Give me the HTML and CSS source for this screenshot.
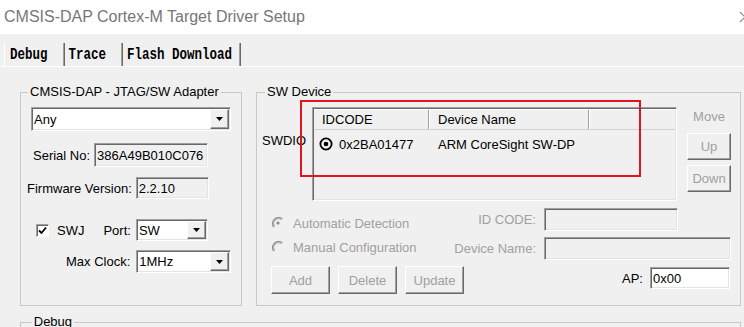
FILE: index.html
```html
<!DOCTYPE html>
<html lang="en">

<head>
    <meta charset="UTF-8">
    <meta name="viewport" content="width=device-width, initial-scale=1.0">
    <title>CMSIS-DAP Cortex-M Target Driver Setup</title>
    <link rel="stylesheet" href="styles.css">
</head>

<body>
    <div class="titlebar">
        <span class="title">CMSIS-DAP Cortex-M Target Driver Setup</span>
        <svg class="close" width="12" height="12" viewBox="0 0 12 12"><path d="M1 1L11 11M11 1L1 11" stroke="#8a8a8a" stroke-width="1.2"/></svg>
    </div>

    <div class="tabs">
        <span class="tab active"><span>Debug</span></span>
        <span class="tab"><span>Trace</span></span>
        <span class="tab flash"><span>Flash Download</span></span>
    </div>

    <div class="sheet">
        <div class="groups">
            <fieldset class="group adapter">
                <legend>CMSIS-DAP - JTAG/SW Adapter</legend>
                <div class="combo any">
                    <span class="value">Any</span>
                    <span class="drop"><svg width="7" height="4" viewBox="0 0 7 4"><polygon points="0,0 7,0 3.5,4" fill="#000"/></svg></span>
                </div>
                <div class="row serial">
                    <label>Serial No:</label>
                    <span class="field serial-no">386A49B010C076</span>
                </div>
                <div class="row firmware">
                    <label>Firmware Version:</label>
                    <span class="field fw">2.2.10</span>
                </div>
                <div class="row swj">
                    <span class="check"><svg width="9" height="9" viewBox="0 0 9 9"><path d="M1 4.5L3.5 7L8 1.5" stroke="#000" stroke-width="1.8" fill="none"/></svg></span>
                    <label class="swj-label">SWJ</label>
                    <label class="port-label">Port:</label>
                    <div class="combo port">
                        <span class="value">SW</span>
                        <span class="drop"><svg width="7" height="4" viewBox="0 0 7 4"><polygon points="0,0 7,0 3.5,4" fill="#000"/></svg></span>
                    </div>
                </div>
                <div class="row clock">
                    <label>Max Clock:</label>
                    <div class="combo clock-combo">
                        <span class="value">1MHz</span>
                        <span class="drop"><svg width="7" height="4" viewBox="0 0 7 4"><polygon points="0,0 7,0 3.5,4" fill="#000"/></svg></span>
                    </div>
                </div>
            </fieldset>

            <fieldset class="group device">
                <legend>SW Device</legend>
                <div class="device-top">
                    <span class="swdio">SWDIO</span>
                    <div class="list">
                        <div class="list-head">
                            <span class="head-cell c1">IDCODE</span>
                            <span class="head-cell c2">Device Name</span>
                            <span class="head-cell c3"></span>
                        </div>
                        <div class="list-row">
                            <span class="cell c1">
                                <svg width="14" height="14" viewBox="0 0 14 14"><circle cx="7" cy="7" r="5.6" stroke="#000" stroke-width="1.8" fill="none"/><circle cx="7" cy="7" r="2.3" fill="#000"/></svg>
                                0x2BA01477
                            </span>
                            <span class="cell c2">ARM CoreSight SW-DP</span>
                        </div>
                    </div>
                    <div class="move">
                        <span class="move-label">Move</span>
                        <button class="btn up" disabled>Up</button>
                        <button class="btn down" disabled>Down</button>
                    </div>
                </div>

                <div class="config">
                    <span class="radio auto">
                        <svg width="12" height="12" viewBox="0 0 12 12"><path d="M10.2 1.8A6 6 0 0 0 1.8 10.2" stroke="#8a8a8a" stroke-width="1.3" fill="none"/><path d="M9.3 2.7A4.7 4.7 0 0 0 2.7 9.3" stroke="#a8a8a8" stroke-width="1" fill="none"/><circle cx="6" cy="6" r="1.6" fill="#8a8a8a"/></svg>
                        Automatic Detection
                    </span>
                    <label>ID CODE:</label>
                    <span class="field idcode"></span>
                    <span class="radio manual">
                        <svg width="12" height="12" viewBox="0 0 12 12"><path d="M10.2 1.8A6 6 0 0 0 1.8 10.2" stroke="#8a8a8a" stroke-width="1.3" fill="none"/><path d="M9.3 2.7A4.7 4.7 0 0 0 2.7 9.3" stroke="#a8a8a8" stroke-width="1" fill="none"/></svg>
                        Manual Configuration
                    </span>
                    <label>Device Name:</label>
                    <span class="field devname"></span>
                </div>

                <div class="actions">
                    <button class="btn" disabled>Add</button>
                    <button class="btn" disabled>Delete</button>
                    <button class="btn" disabled>Update</button>
                    <label class="ap-label">AP:</label>
                    <span class="field white ap">0x00</span>
                </div>
            </fieldset>
        </div>

        <fieldset class="group debug">
            <legend>Debug</legend>
        </fieldset>
    </div>

    <div class="highlight"></div>
</body>
</html>
```

FILE: styles.css
```css
* {
    box-sizing: border-box;
}

body {
    margin: 0;
    width: 744px;
    height: 327px;
    overflow: hidden;
    position: relative;
    background-color: #f0f0f0;
    font-family: "Liberation Sans", Arial, sans-serif;
    font-size: 13px;
    color: #000;
}

/* window title */
.titlebar {
    height: 34px;
    background-color: #fff;
    display: flex;
    align-items: center;
    justify-content: space-between;
    padding-left: 4px;
}

.title {
    font-size: 16px;
    color: #777;
}

.close {
    margin-right: -7px;
}

/* tab strip */
.tabs {
    height: 33px;
    padding: 9px 0 0 4px;
    display: flex;
    border-bottom: 1px solid #fff;
}

.tab {
    height: 23px;
    display: flex;
    align-items: center;
    padding: 0 15px 0 5px;
    font-family: "Liberation Mono", monospace;
    font-weight: bold;
    font-size: 12.5px;
    border-right: 1px solid #a0a0a0;
    box-shadow: 1px 0 0 #696969;
}

.tab span {
    display: inline-block;
    transform: scaleY(1.3);
}

.tab.active {
    border-left: 1px solid #fff;
}

.tab.flash {
    padding-right: 7px;
}

/* tab page */
.sheet {
    padding-top: 17px;
}

.groups {
    display: flex;
    gap: 14px;
    margin-left: 20px;
}

.group {
    margin: 0;
    min-width: 0;
    border: 1px solid #c8c8c8;
}

.group legend {
    padding: 0 2px;
    line-height: 16px;
}

.adapter {
    width: 222px;
    padding: 7px 0 0 6px;
}

.adapter legend {
    margin-left: 1px;
}

.device {
    width: 485px;
    padding: 7px 9px 11px 5px;
}

.device legend {
    margin-left: 3px;
}

.debug {
    width: 721px;
    height: 40px;
    margin: 8px 0 0 20px;
}

.debug legend {
    margin-left: 1px;
}

/* sunken edit and combo boxes */
.combo,
.field {
    display: flex;
    align-items: center;
    border: 1px solid;
    border-color: #a0a0a0 #fff #fff #a0a0a0;
    box-shadow: inset 1px 1px 0 #696969, inset -1px -1px 0 #e3e3e3;
    padding: 1px;
}

.combo {
    align-items: stretch;
    background-color: #fff;
}

.combo .value {
    flex: 1;
    display: flex;
    align-items: center;
    padding-left: 1px;
}

.drop {
    width: 19px;
    display: flex;
    align-items: center;
    justify-content: center;
    background-color: #f0f0f0;
    border: 1px solid;
    border-color: #fff #696969 #696969 #fff;
    box-shadow: inset -1px -1px 0 #a0a0a0;
}

.field {
    background-color: #f0f0f0;
    padding-left: 2px;
}

.field.white {
    background-color: #fff;
}

.row {
    display: flex;
    align-items: center;
}

.any {
    width: 200px;
    height: 24px;
    margin-left: 4px;
}

.serial {
    margin: 12px 0 0 6px;
    height: 24px;
}

.serial-no {
    width: 114px;
    height: 24px;
    margin-left: 4px;
}

.firmware {
    margin-top: 10px;
    height: 22px;
}

.fw {
    width: 73px;
    height: 22px;
    margin-left: 4px;
}

.swj {
    margin-top: 20px;
    height: 22px;
}

.check {
    width: 13px;
    height: 13px;
    margin-left: 9px;
    display: flex;
    align-items: center;
    justify-content: center;
    background-color: #fff;
    border: 1px solid;
    border-color: #a0a0a0 #fff #fff #a0a0a0;
    box-shadow: inset 1px 1px 0 #696969;
}

.swj-label {
    margin-left: 8px;
}

.port-label {
    margin-left: 19px;
}

.port {
    width: 72px;
    height: 22px;
    margin-left: 5px;
}

.clock {
    margin: 9px 0 0 39px;
    height: 23px;
}

.clock-combo {
    width: 95px;
    height: 23px;
    margin-left: 6px;
}

/* device list */
.device-top {
    display: flex;
    height: 94px;
}

.swdio {
    width: 50px;
    padding-top: 26px;
    line-height: 16px;
}

.list {
    width: 365px;
    height: 94px;
    border: 1px solid;
    border-color: #a0a0a0 #fff #fff #a0a0a0;
    box-shadow: inset 1px 1px 0 #696969, inset -1px -1px 0 #e3e3e3;
    padding: 1px;
    background-color: #f0f0f0;
}

.list-head {
    display: flex;
    height: 21px;
    border-top: 1px solid #fff;
    border-bottom: 1px solid #d0d0d0;
}

.head-cell {
    display: flex;
    align-items: center;
    border-right: 1px solid #a0a0a0;
    box-shadow: 1px 0 0 #fff;
}

.c1 {
    width: 115px;
    padding-left: 8px;
}

.c2 {
    width: 160px;
    padding-left: 9px;
}

.c3 {
    flex: 1;
    border-right: none;
    box-shadow: none;
}

.list-row {
    display: flex;
    height: 22px;
    margin-top: 3px;
}

.cell {
    display: flex;
    align-items: center;
    gap: 6px;
}

.list-row .c1 {
    padding-left: 5px;
}

.move {
    width: 44px;
    margin-left: 10px;
    display: flex;
    flex-direction: column;
}

.move-label {
    margin-top: 2px;
    line-height: 16px;
    text-align: center;
    color: #a0a0a0;
}

/* raised push buttons */
.btn {
    font-family: inherit;
    font-size: 13px;
    color: #a0a0a0;
    background-color: #f0f0f0;
    border: 1px solid;
    border-color: #fff #696969 #696969 #fff;
    box-shadow: inset -1px -1px 0 #a0a0a0;
    padding: 0;
    height: 28px;
    width: 59px;
}

.move .btn {
    width: 44px;
    height: 27px;
}

.up {
    margin-top: 8px;
}

.down {
    margin-top: 5px;
}

/* detection settings */
.config {
    display: grid;
    grid-template-columns: 182px 84px 1fr;
    grid-template-rows: 23px 23px;
    column-gap: 8px;
    row-gap: 6px;
    margin-top: 7px;
    color: #a0a0a0;
}

.config label {
    text-align: right;
    align-self: center;
}

.radio {
    display: flex;
    align-items: center;
    gap: 9px;
    padding-left: 10px;
}

.radio.auto {
    margin-top: 7px;
}

.radio.manual {
    margin-bottom: 3px;
}

.idcode {
    width: 134px;
}

.actions {
    display: flex;
    align-items: flex-start;
    height: 28px;
    margin-top: 6px;
}

.actions .btn {
    margin-right: 8px;
}

.actions .btn:first-child {
    margin-left: 9px;
}

.ap-label {
    margin-left: auto;
    align-self: center;
    margin-top: -3px;
}

.ap {
    width: 80px;
    height: 22px;
    margin: 1px 1px 0 7px;
}

/* red marker drawn over the list */
.highlight {
    position: absolute;
    left: 300px;
    top: 100px;
    width: 341px;
    height: 77px;
    border: 2px solid #e5131d;
}
```
